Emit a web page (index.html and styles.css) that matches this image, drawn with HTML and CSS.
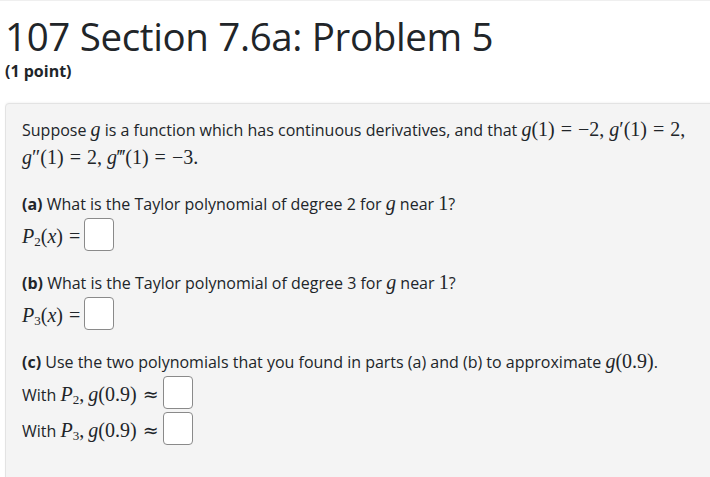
FILE: index.html
```html
<!DOCTYPE html>
<html>
<head>
<meta charset="utf-8">
<link rel="stylesheet" href="styles.css">
</head>
<body>
<div class="topline"></div>
<div class="page">
  <h1 class="title">107 Section 7.6a: Problem 5</h1>
  <div class="points">(1 point)</div>
  <div class="card">
    <p class="para">Suppose <span class="m mi">g</span> is a function which has continuous derivatives, and that <span class="m"><span class="mi">g</span>(1) <span class="rel">=</span> −2, <span class="mi">g</span>′(1) <span class="rel">=</span> 2,</span><br><span class="m"><span class="mi">g</span>″(1) <span class="rel">=</span> 2, <span class="mi">g</span>‴(1) <span class="rel">=</span> −3.</span></p>

    <p class="para"><b>(a)</b> What is the Taylor polynomial of degree 2 for <span class="m mi">g</span> near <span class="m">1</span>?<br>
      <span class="m"><span class="mi">P</span><sub>2</sub>(<span class="mi">x</span>) <span class="rel">=</span></span><span class="box"></span></p>

    <p class="para"><b>(b)</b> What is the Taylor polynomial of degree 3 for <span class="m mi">g</span> near <span class="m">1</span>?<br>
      <span class="m"><span class="mi">P</span><sub>3</sub>(<span class="mi">x</span>) <span class="rel">=</span></span><span class="box"></span></p>

    <p class="para"><b>(c)</b> Use the two polynomials that you found in parts (a) and (b) to approximate <span class="m"><span class="mi">g</span>(0.9)</span>.<br>
      <span class="row">With <span class="m"><span class="mi">P</span><sub>2</sub>,</span> <span class="m"><span class="mi">g</span>(0.9) <span class="rel approx">≈</span></span><span class="box"></span></span><br>
      <span class="row">With <span class="m"><span class="mi">P</span><sub>3</sub>,</span> <span class="m"><span class="mi">g</span>(0.9) <span class="rel approx">≈</span></span><span class="box"></span></span></p>
  </div>
</div>
</body>
</html>
```

FILE: styles.css
```css
html, body {
  margin: 0;
  padding: 0;
  background: #ffffff;
  overflow: hidden;
}
body {
  font-family: "Open Sans", "Noto Sans", sans-serif;
  color: #212529;
  font-size: 16px;
}
.topline {
  height: 1px;
  background: #efefef;
}
.page {
  padding: 0 0 0 5px;
}
.title {
  font-family: "Open Sans", sans-serif;
  font-weight: 400;
  font-size: 38.5px;
  line-height: 1.2;
  margin: 12px 0 0 0;
  letter-spacing: -0.35px;
}
.points {
  font-weight: 700;
  font-size: 16px;
  line-height: 24px;
  margin-top: 0;
}
.card {
  margin-top: 20px;
  margin-right: -40px;
  background: #f4f4f4;
  border: 1px solid #e3e3e3;
  border-radius: 4px;
  box-shadow: 0 -1px 2px rgba(0,0,0,0.04);
  padding: 12px 17px 40px 16px;
  min-height: 400px;
}
.para {
  margin: 0 0 18px 0;
  line-height: 27px;
  letter-spacing: 0;
}
.m {
  font-family: "Liberation Serif", "DejaVu Serif", serif;
  font-size: 20px;
}
.mi {
  font-style: italic;
}
.rel {
  margin: 0 1px;
}
.approx {
  font-family: "DejaVu Sans", sans-serif;
  font-size: 19px;
  line-height: 0;
}
.m sub {
  font-size: 13px;
  font-style: normal;
  vertical-align: -3px;
  line-height: 0;
}
.box {
  display: inline-block;
  width: 28px;
  height: 31px;
  border: 1px solid #8a8a8a;
  border-radius: 4px;
  background: #ffffff;
  vertical-align: -8px;
  margin-left: 3px;
}
.row {
  display: inline-block;
  line-height: 33px;
}
```
